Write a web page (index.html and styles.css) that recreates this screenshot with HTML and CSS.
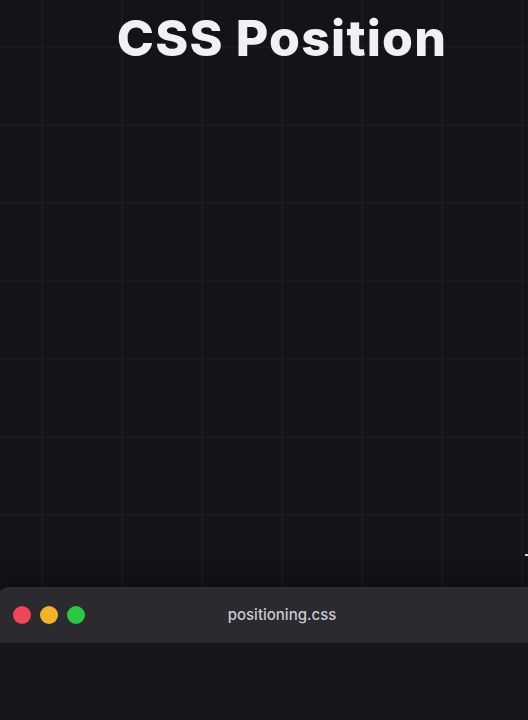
FILE: index.html
```html
<!DOCTYPE html>
<html lang="en">
<head>
    <meta charset="UTF-8">
    <meta name="viewport" content="width=device-width, initial-scale=1.0">
    <title>CSS Position</title>
    <link rel="stylesheet" href="styles.css">
</head>
<body>
    <div class="stage">
        <h1 class="title">CSS Position</h1>
        <span class="spark"></span>

        <!-- editor window -->
        <div class="window">
            <div class="window-bar">
                <div class="lights">
                    <span class="light red"></span>
                    <span class="light yellow"></span>
                    <span class="light green"></span>
                </div>
                <div class="file-name">positioning.css</div>
            </div>
            <div class="window-body"></div>
        </div>
    </div>
</body>
</html>
```

FILE: styles.css
```css
body {
    margin: 0;
    padding: 0;
    background-color: #12141a;
    font-family: Inter, "Open Sans", sans-serif;
}

.stage {
    position: relative;
    height: 720px;
    overflow: hidden;
    background-color: #12141a;
    background-image:
        linear-gradient(to right, #191b21 2px, transparent 2px),
        linear-gradient(to bottom, #181a20 2px, transparent 2px);
    background-size: 80px 78px;
    background-position: 41px 46px;
    display: flex;
    flex-direction: column;
}

.title {
    margin: 11px 0 0;
    padding-left: 36px;
    text-align: center;
    color: #f1f1f5;
    font-size: 50px;
    font-weight: 800;
    letter-spacing: 1.2px;
    line-height: 54px;
}

.spark {
    position: absolute;
    top: 554px;
    right: 0;
    width: 3px;
    height: 2px;
    background: #d8d8dc;
}

.window {
    margin-top: auto;
    margin-left: -4px;
    width: 572px;
    height: 133px;
    border-radius: 14px 14px 0 0;
    overflow: hidden;
    box-shadow: 0 -6px 20px rgba(0, 0, 0, 0.35);
}

.window-bar {
    height: 55px;
    background-color: #2a2a2f;
    display: flex;
    align-items: center;
    position: relative;
    border-bottom: 1px solid #232328;
}

.lights {
    display: flex;
    gap: 9px;
    padding-left: 17px;
}

.light {
    width: 18px;
    height: 18px;
    border-radius: 50%;
}

.red { background-color: #ef4659; }
.yellow { background-color: #f2b22a; }
.green { background-color: #26c940; }

.file-name {
    position: absolute;
    left: 0;
    right: 0;
    text-align: center;
    color: #c9c9ce;
    font-size: 15px;
    font-weight: 500;
}

.window-body {
    height: 78px;
    background-color: #16161b;
}
```
